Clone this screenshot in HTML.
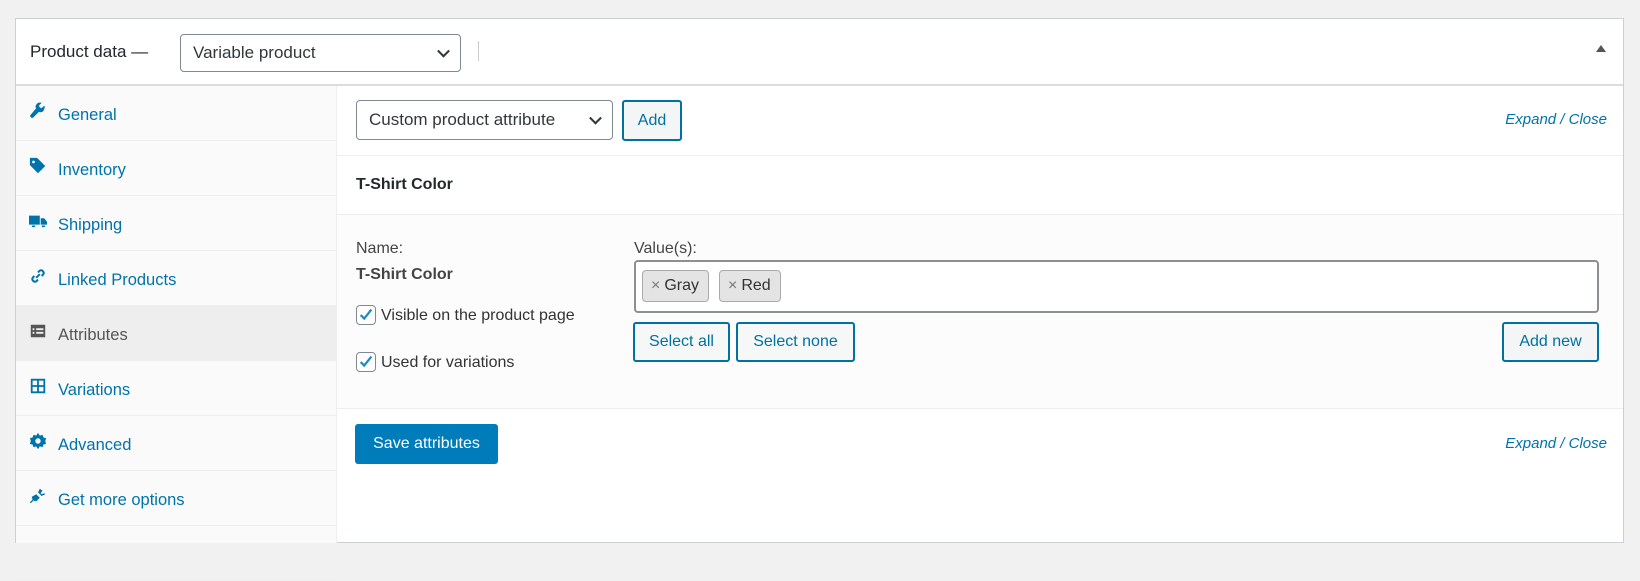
<!DOCTYPE html>
<html><head><meta charset="utf-8"><style>
*{box-sizing:border-box;margin:0;padding:0}
body{width:1640px;height:560px;background:#f1f1f1;font-family:"Liberation Sans",sans-serif;font-size:16px;color:#23282d;position:relative;overflow:hidden}
.a{position:absolute}
.box{left:15px;top:18px;width:1609px;height:525px;background:#fff;border:1px solid #ccd0d4}
.hdr{left:0;top:0;width:1607px;height:67px;border-bottom:2px solid #dcdcde}
.sel{border:1px solid #7e8993;border-radius:4px;background:#fff;display:flex;align-items:center;padding-left:12px;color:#32373c}
.chev{position:absolute;right:12px;top:50%;width:9px;height:9px;border-right:2px solid #32373c;border-bottom:2px solid #32373c;transform:translateY(-70%) rotate(45deg)}
.side{left:0;top:67px;width:321px;height:457px;background:#fafafa;border-right:1px solid #eee}
.it{position:absolute;left:0;width:320px;height:55px;border-bottom:1px solid #eee;display:flex;align-items:center;color:#0073aa;padding-top:5px}
.it span.t{position:absolute;left:42px;font-size:16.5px}
.ic{position:absolute;left:13px;top:16px;width:18px;height:18px;fill:#0073aa}
.btn{position:absolute;border:1px solid #0071a1;border-radius:3px;background:#f3f5f6;color:#0071a1;display:flex;align-items:center;justify-content:center}
.lnk{color:#0073aa;font-style:italic;font-size:15px}
.cb{position:absolute;width:20px;height:20px;border:1px solid #7e8993;border-radius:4px;background:#fff}
.tag{position:absolute;height:32px;background:#e4e4e4;border:1px solid #aaa;border-radius:4px;display:flex;align-items:center;padding-left:8px;color:#333}
</style></head><body>
<div class="a box">
 <div class="a hdr">
  <div class="a" style="left:14px;top:23px;font-size:17px;color:#23282d">Product data —</div>
  <div class="a sel" style="left:164px;top:15px;width:281px;height:38px;font-size:17px">Variable product<div class="chev"></div></div>
  <div class="a" style="left:462px;top:22px;width:1px;height:20px;background:#ccc"></div>
  <div class="a" style="left:1580px;top:26px;width:0;height:0;border-left:5px solid transparent;border-right:5px solid transparent;border-bottom:7px solid #555"></div>
 </div>
 <div class="a side">
  <div class="it" style="top:0"><svg class="ic" viewBox="0 0 20 20"><path d="M17 4l-3 3-2-1-1-2 3-3c-2-1-5 0-6 2-1 1-1 3 0 4L2 14c-1 1-1 2 0 3s2 1 3 0l6-6c2 1 4 0 5-1 1-2 2-4 1-6z"/></svg><span class="t">General</span></div>
  <div class="it" style="top:55px"><svg class="ic" viewBox="0 0 20 20"><path d="M9 1l9 9-8 8-9-9V1h8zM5 4a1.5 1.5 0 100 3 1.5 1.5 0 000-3z"/></svg><span class="t">Inventory</span></div>
  <div class="it" style="top:110px"><svg class="ic" viewBox="0 0 20 20"><path d="M0 4h12v10H0zM13 7h4l3 4v3h-7zM3 15a2 2 0 104 0zM14 15a2 2 0 104 0z"/></svg><span class="t">Shipping</span></div>
  <div class="it" style="top:165px"><svg class="ic" viewBox="0 0 20 20"><path d="M8 12l4-4M10 6l2-2a3 3 0 014 4l-2 2M10 14l-2 2a3 3 0 01-4-4l2-2" stroke="#0073aa" stroke-width="2.2" fill="none"/></svg><span class="t">Linked Products</span></div>
  <div class="it" style="top:220px;background:#eee;color:#555"><svg class="ic" viewBox="0 0 20 20" style="fill:#555"><path d="M2 3h16v14H2zM4 7v2h2V7zm4 0v2h8V7zm-4 4v2h2v-2zm4 0v2h8v-2z" fill-rule="evenodd"/></svg><span class="t">Attributes</span></div>
  <div class="it" style="top:275px"><svg class="ic" viewBox="0 0 20 20"><path d="M2 2h16v16H2zM4 4v5h5V4zm7 0v5h5V4zM4 11v5h5v-5zm7 0v5h5v-5z" fill-rule="evenodd"/></svg><span class="t">Variations</span></div>
  <div class="it" style="top:330px"><svg class="ic" viewBox="0 0 20 20"><path d="M10 1l2 3 3-1 1 3 3 1-1 3 1 3-3 1-1 3-3-1-2 3-2-3-3 1-1-3-3-1 1-3-1-3 3-1 1-3 3 1zM10 7a3 3 0 100 6 3 3 0 000-6z" fill-rule="evenodd"/></svg><span class="t">Advanced</span></div>
  <div class="it" style="top:385px"><svg class="ic" viewBox="0 0 20 20"><path d="M12 2l-2 4 4 4 4-2-1-1-3 1-1-1 2-3zM8 8l4 4-4 4-3-1-3 3-1-1 3-3-1-3z"/></svg><span class="t">Get more options</span></div>
  <div class="it" style="top:440px"></div>
 </div>
 <div class="a sel" style="left:340px;top:81px;width:257px;height:40px;font-size:17px">Custom product attribute<div class="chev"></div></div>
 <div class="btn" style="left:606px;top:81px;width:60px;height:41px;font-size:16px;border-width:2px">Add</div>
 <div class="a lnk" style="right:16px;top:92px">Expand / Close</div>
 <div class="a" style="left:321px;top:136px;width:1286px;height:1px;background:#eee"></div>
 <div class="a" style="left:340px;top:157px;font-weight:bold;font-size:16px">T-Shirt Color</div>
 <div class="a" style="left:321px;top:195px;width:1286px;height:195px;background:#fcfcfc;border-top:1px solid #eee;border-bottom:1px solid #eee"></div>
 <div class="a" style="left:340px;top:221px;color:#444">Name:</div>
 <div class="a" style="left:340px;top:247px;font-weight:bold;color:#444">T-Shirt Color</div>
 <div class="cb" style="left:340px;top:286px"><svg viewBox="0 0 20 20" width="18" height="18"><path d="M4 10l4 4 8-10" stroke="#1e8cbe" stroke-width="2.5" fill="none"/></svg></div>
 <div class="a" style="left:365px;top:288px;color:#333">Visible on the product page</div>
 <div class="cb" style="left:340px;top:333px"><svg viewBox="0 0 20 20" width="18" height="18"><path d="M4 10l4 4 8-10" stroke="#1e8cbe" stroke-width="2.5" fill="none"/></svg></div>
 <div class="a" style="left:365px;top:335px;color:#333">Used for variations</div>
 <div class="a" style="left:618px;top:221px;color:#444">Value(s):</div>
 <div class="a" style="left:618px;top:241px;width:965px;height:53px;border:2px solid #8c8f94;border-radius:4px;background:#fff"></div>
 <div class="tag" style="left:626px;top:251px;width:67px"><span style="color:#777;margin-right:4px">×</span>Gray</div>
 <div class="tag" style="left:703px;top:251px;width:62px"><span style="color:#777;margin-right:4px">×</span>Red</div>
 <div class="btn" style="left:617px;top:303px;width:97px;height:40px;border-width:2px;background:#f6f7f7">Select all</div>
 <div class="btn" style="left:720px;top:303px;width:119px;height:40px;border-width:2px;background:#f6f7f7">Select none</div>
 <div class="btn" style="left:1486px;top:303px;width:97px;height:40px;border-width:2px">Add new</div>
 <div class="a" style="left:339px;top:405px;width:143px;height:40px;background:#007cba;border-radius:3px;color:#fff;display:flex;align-items:center;justify-content:center">Save attributes</div>
 <div class="a lnk" style="right:16px;top:416px">Expand / Close</div>
</div>
</body></html>
